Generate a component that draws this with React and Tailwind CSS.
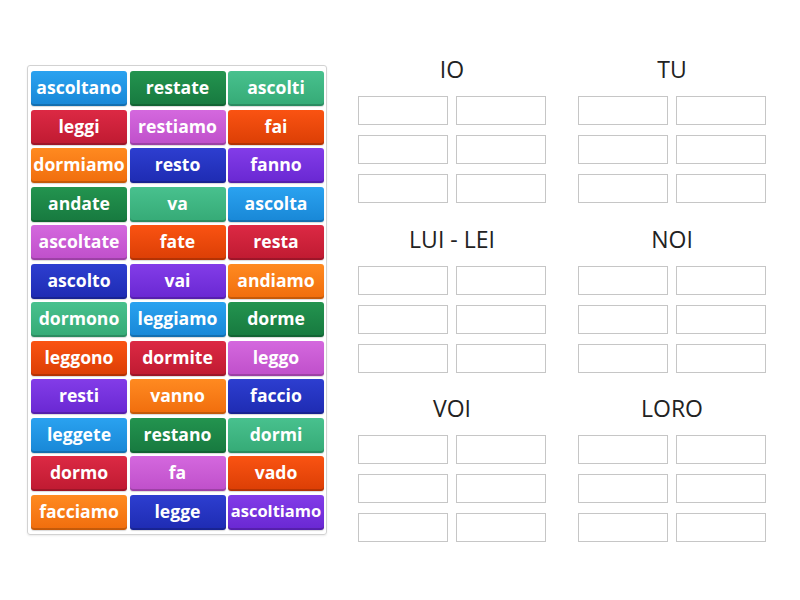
import React from "react";

// colour classes written out in full so Tailwind picks them up
const COLORS = {
  blue: "from-[#2aa2f0] to-[#1887d6]",
  dkgreen: "from-[#23944f] to-[#17793f]",
  ltgreen: "from-[#48c18e] to-[#35aa76]",
  red: "from-[#dc2944] to-[#bf1a31]",
  pink: "from-[#d468de] to-[#bf4fca]",
  orangered: "from-[#fa5312] to-[#db3e05]",
  orange: "from-[#ff8a20] to-[#f06d0c]",
  dkblue: "from-[#2d3ed0] to-[#1e2bb2]",
  purple: "from-[#833ce8] to-[#6927d2]",
};

const TILES = [
  ["ascoltano", "blue"], ["restate", "dkgreen"], ["ascolti", "ltgreen"],
  ["leggi", "red"], ["restiamo", "pink"], ["fai", "orangered"],
  ["dormiamo", "orange"], ["resto", "dkblue"], ["fanno", "purple"],
  ["andate", "dkgreen"], ["va", "ltgreen"], ["ascolta", "blue"],
  ["ascoltate", "pink"], ["fate", "orangered"], ["resta", "red"],
  ["ascolto", "dkblue"], ["vai", "purple"], ["andiamo", "orange"],
  ["dormono", "ltgreen"], ["leggiamo", "blue"], ["dorme", "dkgreen"],
  ["leggono", "orangered"], ["dormite", "red"], ["leggo", "pink"],
  ["resti", "purple"], ["vanno", "orange"], ["faccio", "dkblue"],
  ["leggete", "blue"], ["restano", "dkgreen"], ["dormi", "ltgreen"],
  ["dormo", "red"], ["fa", "pink"], ["vado", "orangered"],
  ["facciamo", "orange"], ["legge", "dkblue"], ["ascoltiamo", "purple"],
];

const GROUPS = ["IO", "TU", "LUI - LEI", "NOI", "VOI", "LORO"];

function Tile({ word, color }) {
  const small = word.length >= 10;
  return (
    <div
      className={`h-[35px] pb-[2px] rounded-[3px] bg-linear-to-b ${COLORS[color]} shadow-[inset_0_-2px_0_rgba(0,0,0,0.18),0_1px_1px_rgba(0,0,0,0.15)] flex items-center justify-center text-white font-bold whitespace-nowrap ${small ? "text-[16.5px]" : "text-[17.6px]"}`}
    >
      {word}
    </div>
  );
}

function Group({ title }) {
  return (
    <div className="flex flex-col">
      <div className="h-[30px] leading-[30px] text-center text-[23px] text-[#222]">{title}</div>
      <div className="mt-[12px] grid grid-cols-[90px_90px] gap-x-2 gap-y-[10px]">
        {Array.from({ length: 6 }).map((_, i) => (
          <div key={i} className="h-[29px] bg-white border border-[#c6c6c6]" />
        ))}
      </div>
    </div>
  );
}

export default function App() {
  return (
    <div
      className="w-[800px] h-[600px] bg-white flex items-start"
      style={{ fontFamily: '"Open Sans", sans-serif' }}
    >
      {/* word bank */}
      <div className="ml-[27px] mt-[65px] w-[300px] border border-[#d2d2d2] rounded-[3px] shadow-[0_1px_2px_rgba(0,0,0,0.08)] pl-[3px] pt-[5px] pb-[4px] pr-[1px]">
        <div className="grid grid-cols-[96px_96px_96px] gap-x-[2.5px] gap-y-[3.5px]">
          {TILES.map(([w, c]) => (
            <Tile key={w} word={w} color={c} />
          ))}
        </div>
      </div>

      {/* target groups */}
      <div className="ml-[31px] mt-[54px] grid grid-cols-[188px_188px] gap-x-8 gap-y-[20.5px]">
        {GROUPS.map((g) => (
          <Group key={g} title={g} />
        ))}
      </div>
    </div>
  );
}
